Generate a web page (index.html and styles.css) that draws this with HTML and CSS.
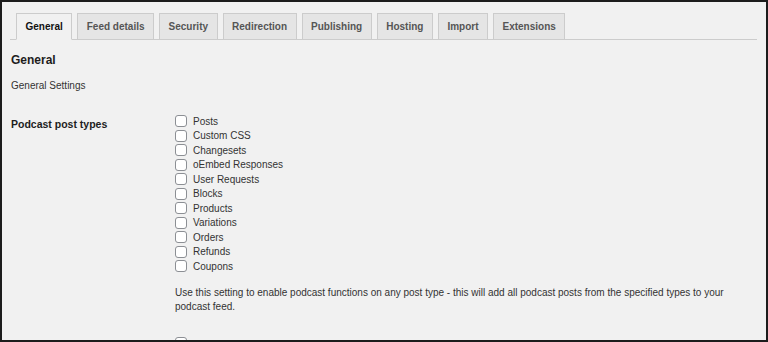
FILE: index.html
```html
<!DOCTYPE html>
<html lang="en">
<head>
    <meta charset="UTF-8">
    <meta name="viewport" content="width=device-width, initial-scale=1.0">
    <title>Podcast Settings - General</title>
    <link rel="stylesheet" href="styles.css">
</head>
<body>

<div class="frame">
    <nav class="nav-tabs">
        <a href="#" class="nav-tab active">General</a>
        <a href="#" class="nav-tab">Feed details</a>
        <a href="#" class="nav-tab">Security</a>
        <a href="#" class="nav-tab">Redirection</a>
        <a href="#" class="nav-tab">Publishing</a>
        <a href="#" class="nav-tab">Hosting</a>
        <a href="#" class="nav-tab">Import</a>
        <a href="#" class="nav-tab">Extensions</a>
    </nav>

    <h2>General</h2>
    <p class="intro">General Settings</p>

    <div class="form-row">
        <div class="form-label">Podcast post types</div>
        <div class="form-field">
            <label class="check"><input type="checkbox"> Posts</label>
            <label class="check"><input type="checkbox"> Custom CSS</label>
            <label class="check"><input type="checkbox"> Changesets</label>
            <label class="check"><input type="checkbox"> oEmbed Responses</label>
            <label class="check"><input type="checkbox"> User Requests</label>
            <label class="check"><input type="checkbox"> Blocks</label>
            <label class="check"><input type="checkbox"> Products</label>
            <label class="check"><input type="checkbox"> Variations</label>
            <label class="check"><input type="checkbox"> Orders</label>
            <label class="check"><input type="checkbox"> Refunds</label>
            <label class="check"><input type="checkbox"> Coupons</label>
            <p class="description">Use this setting to enable podcast functions on any post type - this will add all podcast posts from the specified types to your podcast feed.</p>
        </div>
    </div>

    <div class="form-row next-row">
        <div class="form-label"></div>
        <div class="form-field">
            <label class="check"><input type="checkbox"></label>
        </div>
    </div>
</div>

</body>
</html>
```

FILE: styles.css
```css
body {
    margin: 0;
    background-color: #f1f1f1;
    font-family: "Liberation Sans", Arial, sans-serif;
    color: #333;
}
.frame {
    height: 342px;
    box-sizing: border-box;
    border: 2px solid #1c1c1c;
    padding: 0 9px 0 8px;
    overflow: hidden;
}
.nav-tabs {
    display: flex;
    gap: 5px;
    margin-top: 11px;
    padding-left: 6px;
    border-bottom: 1px solid #ccc;
}
.nav-tab {
    height: 27px;
    box-sizing: border-box;
    margin-bottom: -1px;
    padding: 0 8.5px;
    line-height: 25px;
    font-size: 10px;
    font-weight: bold;
    color: #555;
    text-decoration: none;
    background-color: #e5e5e5;
    border: 1px solid #ccc;
}
.nav-tab.active {
    color: #111;
    background-color: #f1f1f1;
    border-bottom-color: #f1f1f1;
}
h2 {
    margin: 12px 0 0 1px;
    font-size: 12px;
    line-height: 16px;
    color: #1d1d1d;
}
.intro {
    margin: 11px 0 0 1px;
    font-size: 10px;
    line-height: 14px;
}
.form-row {
    display: grid;
    grid-template-columns: 165px 1fr;
    margin-top: 21px;
}
.form-label {
    padding: 3px 0 0 1px;
    font-size: 10.5px;
    line-height: 14px;
    font-weight: bold;
    color: #1d1d1d;
}
.form-field {
    font-size: 10px;
}
.check {
    display: flex;
    align-items: center;
    gap: 6px;
    height: 14.5px;
}
.check input {
    appearance: none;
    width: 12px;
    height: 12px;
    margin: 0;
    box-sizing: border-box;
    border: 1px solid #8c8f94;
    border-radius: 3px;
    background-color: #fff;
}
.description {
    margin: 12px 0 0;
    line-height: 14px;
    max-width: 575px;
}
.next-row {
    margin-top: 22px;
}
```
